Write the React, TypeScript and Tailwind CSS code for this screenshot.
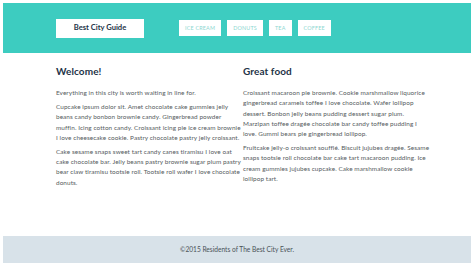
const NAV = ['Ice Cream', 'Donuts', 'Tea', 'Coffee'];

const FONT = "font-['Lato','Noto_Sans',sans-serif]";

function Column({ title, paragraphs }: { title: string; paragraphs: string[] }) {
  return (
    <section>
      <h2 className="text-[10px] leading-[14px] font-bold text-[#1d3347] tracking-[0.1px]">{title}</h2>
      <div className="mt-[10px] flex flex-col gap-[3.7px]">
        {paragraphs.map((p, i) => (
          <p key={i} className="text-[6.4px] leading-[10.3px] tracking-[0.08px] text-[#555b60]">
            {p}
          </p>
        ))}
      </div>
    </section>
  );
}

export default function App() {
  return (
    <div className={`${FONT} h-[266px] w-[474px] bg-white p-[3px] flex flex-col`}>
      <header className="h-[50px] bg-[#3dccc0] flex items-center">
        <div className="ml-[53px] flex items-center">
          <div className="w-[88px] h-[19px] bg-white flex items-center justify-center text-[7.6px] font-bold text-[#1d3347]">
            Best City Guide
          </div>
          <nav className="ml-[35px] flex gap-[6px]">
            {NAV.map((n) => (
              <div
                key={n}
                className="h-[16px] px-[6px] bg-white flex items-center text-[5.4px] uppercase tracking-[0.2px] text-[#8ed7d1]"
              >
                {n}
              </div>
            ))}
          </nav>
        </div>
      </header>
      <main className="flex-1 pt-[11px]">
        <div className="ml-[53px] grid grid-cols-[186px_188px] gap-x-[1px]">
          <Column
            title="Welcome!"
            paragraphs={[
              'Everything in this city is worth waiting in line for.',
              'Cupcake ipsum dolor sit. Amet chocolate cake gummies jelly beans candy bonbon brownie candy. Gingerbread powder muffin. Icing cotton candy. Croissant icing pie ice cream brownie I love cheesecake cookie. Pastry chocolate pastry jelly croissant.',
              'Cake sesame snaps sweet tart candy canes tiramisu I love oat cake chocolate bar. Jelly beans pastry brownie sugar plum pastry bear claw tiramisu tootsie roll. Tootsie roll wafer I love chocolate donuts.',
            ]}
          />
          <Column
            title="Great food"
            paragraphs={[
              'Croissant macaroon pie brownie. Cookie marshmallow liquorice gingerbread caramels toffee I love chocolate. Wafer lollipop dessert. Bonbon jelly beans pudding dessert sugar plum. Marzipan toffee dragée chocolate bar candy toffee pudding I love. Gummi bears pie gingerbread lollipop.',
              'Fruitcake jelly-o croissant soufflé. Biscuit jujubes dragée. Sesame snaps tootsie roll chocolate bar cake tart macaroon pudding. Ice cream gummies jujubes cupcake. Cake marshmallow cookie lollipop tart.',
            ]}
          />
        </div>
      </main>
      <footer className="h-[27px] bg-[#d8e2e9] flex items-center justify-center text-[6.6px] text-[#4a5258]">
        ©2015 Residents of The Best City Ever.
      </footer>
    </div>
  );
}
